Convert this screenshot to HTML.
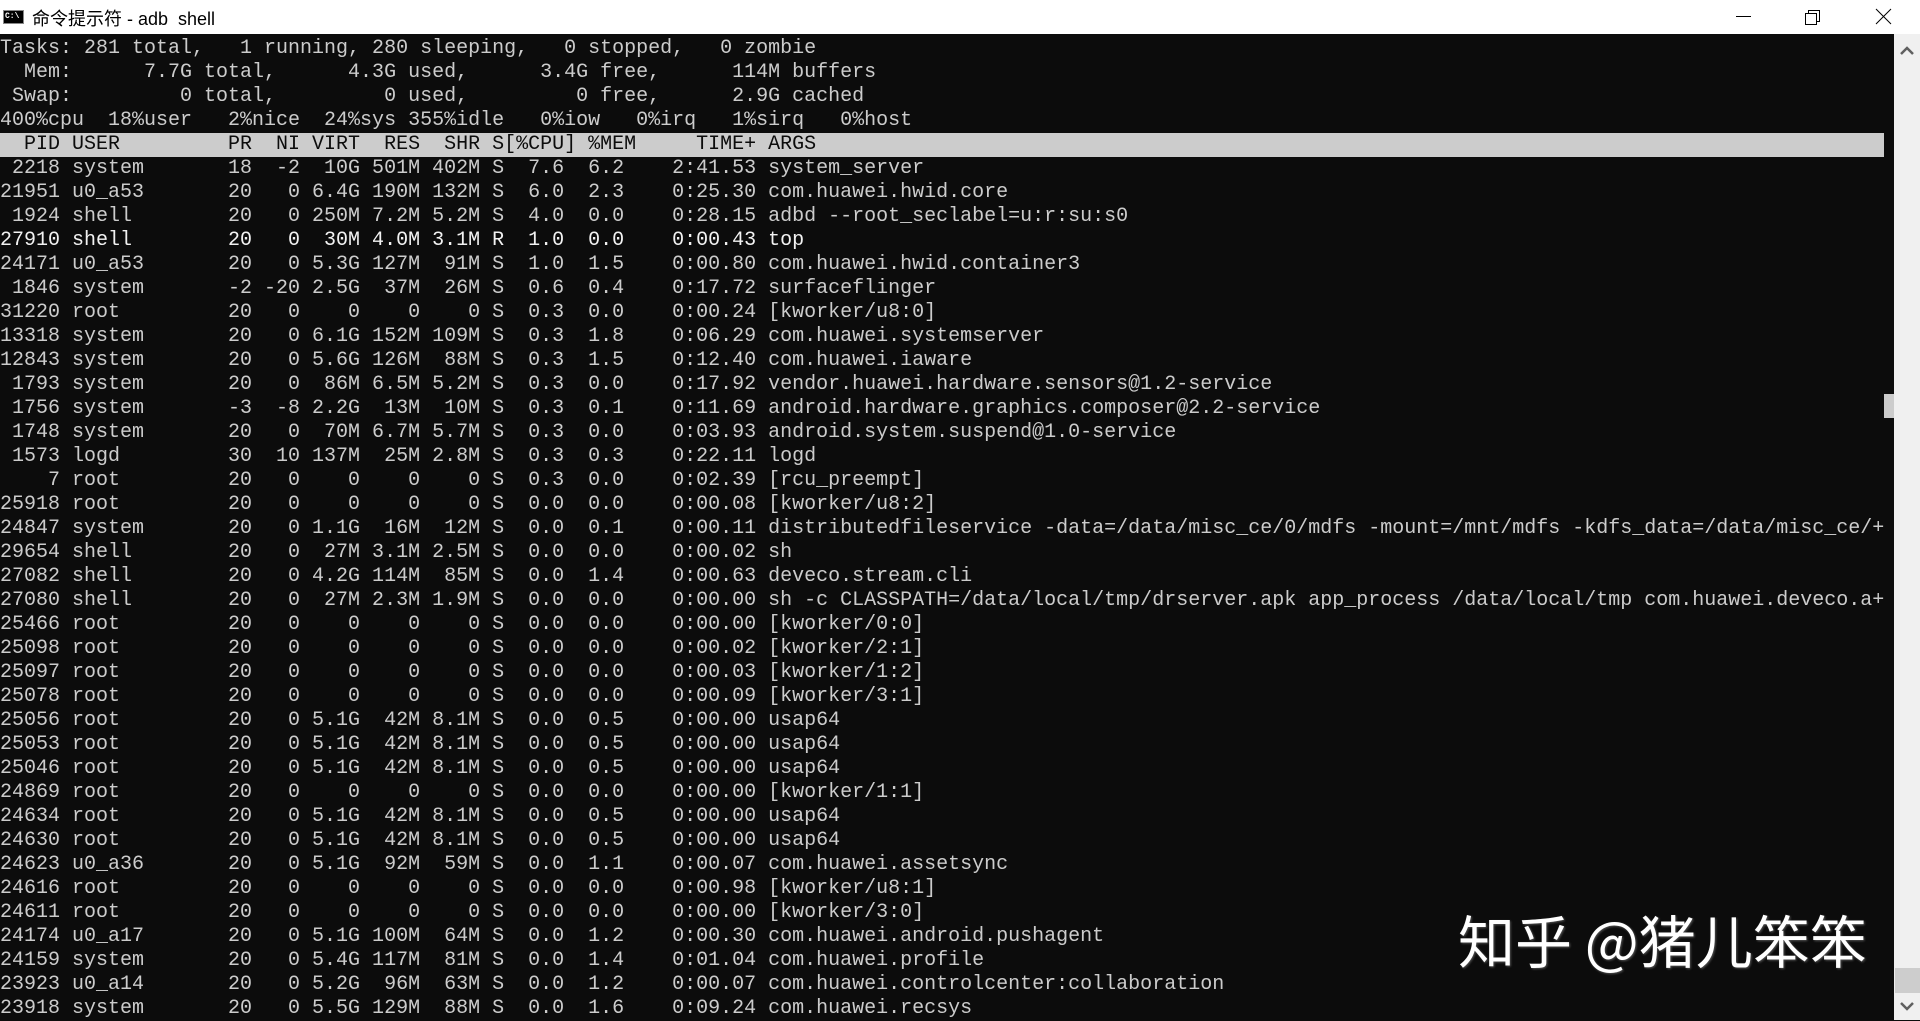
<!DOCTYPE html>
<html><head><meta charset="utf-8"><style>
html,body{margin:0;padding:0;width:1920px;height:1020px;overflow:hidden;background:#0c0c0c;}
#title{position:absolute;left:0;top:0;width:1920px;height:34px;background:#fff;}
#title .t{position:absolute;left:32px;top:5px;font:18px "Liberation Sans","Noto Sans CJK SC",sans-serif;color:#000;}
#icon{position:absolute;left:3px;top:10px;width:21px;height:14px;background:#000;border:1px solid #888;box-sizing:border-box;color:#fff;font:bold 8px "Liberation Mono",monospace;line-height:12px;padding-left:1px;}
#term{position:absolute;left:0;top:34px;width:1894px;height:986px;background:#0c0c0c;}
pre{margin:0;padding-top:3px;font:20px/24px "Liberation Mono",monospace;color:#cccccc;white-space:pre;}
.hl{background:#cccccc;color:#0c0c0c;width:1884px;display:block;}
.b{color:#f2f2f2;}
#sb{position:absolute;left:1894px;top:34px;width:26px;height:986px;background:#f0f0f0;}
#wm{position:absolute;left:1458px;top:898px;font:57px "Noto Sans CJK SC",sans-serif;color:#fff;text-shadow:1px 1px 2px #555;white-space:nowrap;}
</style></head><body>
<div id="title"><div id="icon">C:\</div><div class="t">命令提示符 - adb&nbsp; shell</div>
<svg style="position:absolute;left:1730px;top:8px" width="170" height="20">
<line x1="6" y1="8.5" x2="21" y2="8.5" stroke="#000" stroke-width="1"/>
<rect x="75.5" y="5.5" width="11" height="11" fill="none" stroke="#000"/>
<path d="M78.5 5.5V2.5H89.5V13.5H86.5" fill="none" stroke="#000"/>
<path d="M146 1L161 16M161 1L146 16" stroke="#000" stroke-width="1"/>
</svg></div>
<div id="term"><pre>Tasks: 281 total,   1 running, 280 sleeping,   0 stopped,   0 zombie
  Mem:      7.7G total,      4.3G used,      3.4G free,      114M buffers
 Swap:         0 total,         0 used,         0 free,      2.9G cached
400%cpu  18%user   2%nice  24%sys 355%idle   0%iow   0%irq   1%sirq   0%host
<span class="hl">  PID USER         PR  NI VIRT  RES  SHR S[%CPU] %MEM     TIME+ ARGS</span> 2218 system       18  -2  10G 501M 402M S  7.6  6.2    2:41.53 system_server
21951 u0_a53       20   0 6.4G 190M 132M S  6.0  2.3    0:25.30 com.huawei.hwid.core
 1924 shell        20   0 250M 7.2M 5.2M S  4.0  0.0    0:28.15 adbd --root_seclabel=u:r:su:s0
<span class="b">27910 shell        20   0  30M 4.0M 3.1M R  1.0  0.0    0:00.43 top</span>
24171 u0_a53       20   0 5.3G 127M  91M S  1.0  1.5    0:00.80 com.huawei.hwid.container3
 1846 system       -2 -20 2.5G  37M  26M S  0.6  0.4    0:17.72 surfaceflinger
31220 root         20   0    0    0    0 S  0.3  0.0    0:00.24 [kworker/u8:0]
13318 system       20   0 6.1G 152M 109M S  0.3  1.8    0:06.29 com.huawei.systemserver
12843 system       20   0 5.6G 126M  88M S  0.3  1.5    0:12.40 com.huawei.iaware
 1793 system       20   0  86M 6.5M 5.2M S  0.3  0.0    0:17.92 vendor.huawei.hardware.sensors@1.2-service
 1756 system       -3  -8 2.2G  13M  10M S  0.3  0.1    0:11.69 android.hardware.graphics.composer@2.2-service
 1748 system       20   0  70M 6.7M 5.7M S  0.3  0.0    0:03.93 android.system.suspend@1.0-service
 1573 logd         30  10 137M  25M 2.8M S  0.3  0.3    0:22.11 logd
    7 root         20   0    0    0    0 S  0.3  0.0    0:02.39 [rcu_preempt]
25918 root         20   0    0    0    0 S  0.0  0.0    0:00.08 [kworker/u8:2]
24847 system       20   0 1.1G  16M  12M S  0.0  0.1    0:00.11 distributedfileservice -data=/data/misc_ce/0/mdfs -mount=/mnt/mdfs -kdfs_data=/data/misc_ce/+
29654 shell        20   0  27M 3.1M 2.5M S  0.0  0.0    0:00.02 sh
27082 shell        20   0 4.2G 114M  85M S  0.0  1.4    0:00.63 deveco.stream.cli
27080 shell        20   0  27M 2.3M 1.9M S  0.0  0.0    0:00.00 sh -c CLASSPATH=/data/local/tmp/drserver.apk app_process /data/local/tmp com.huawei.deveco.a+
25466 root         20   0    0    0    0 S  0.0  0.0    0:00.00 [kworker/0:0]
25098 root         20   0    0    0    0 S  0.0  0.0    0:00.02 [kworker/2:1]
25097 root         20   0    0    0    0 S  0.0  0.0    0:00.03 [kworker/1:2]
25078 root         20   0    0    0    0 S  0.0  0.0    0:00.09 [kworker/3:1]
25056 root         20   0 5.1G  42M 8.1M S  0.0  0.5    0:00.00 usap64
25053 root         20   0 5.1G  42M 8.1M S  0.0  0.5    0:00.00 usap64
25046 root         20   0 5.1G  42M 8.1M S  0.0  0.5    0:00.00 usap64
24869 root         20   0    0    0    0 S  0.0  0.0    0:00.00 [kworker/1:1]
24634 root         20   0 5.1G  42M 8.1M S  0.0  0.5    0:00.00 usap64
24630 root         20   0 5.1G  42M 8.1M S  0.0  0.5    0:00.00 usap64
24623 u0_a36       20   0 5.1G  92M  59M S  0.0  1.1    0:00.07 com.huawei.assetsync
24616 root         20   0    0    0    0 S  0.0  0.0    0:00.98 [kworker/u8:1]
24611 root         20   0    0    0    0 S  0.0  0.0    0:00.00 [kworker/3:0]
24174 u0_a17       20   0 5.1G 100M  64M S  0.0  1.2    0:00.30 com.huawei.android.pushagent
24159 system       20   0 5.4G 117M  81M S  0.0  1.4    0:01.04 com.huawei.profile
23923 u0_a14       20   0 5.2G  96M  63M S  0.0  1.2    0:00.07 com.huawei.controlcenter:collaboration
23918 system       20   0 5.5G 129M  88M S  0.0  1.6    0:09.24 com.huawei.recsys</pre>
<div style="position:absolute;left:1884px;top:360px;width:10px;height:24px;background:#cccccc"></div>
</div>
<div id="sb">
<svg style="position:absolute;left:0;top:8px" width="26" height="16"><path d="M7 12L13 6L19 12" fill="none" stroke="#606060" stroke-width="2.5"/></svg>
<div style="position:absolute;left:1px;top:934px;width:25px;height:25px;background:#cdcdcd"></div>
<svg style="position:absolute;left:0;top:964px" width="26" height="16"><path d="M7 5L13 11L19 5" fill="none" stroke="#606060" stroke-width="2.5"/></svg>
</div>
<div id="wm">知乎 @猪儿笨笨</div>
</body></html>
